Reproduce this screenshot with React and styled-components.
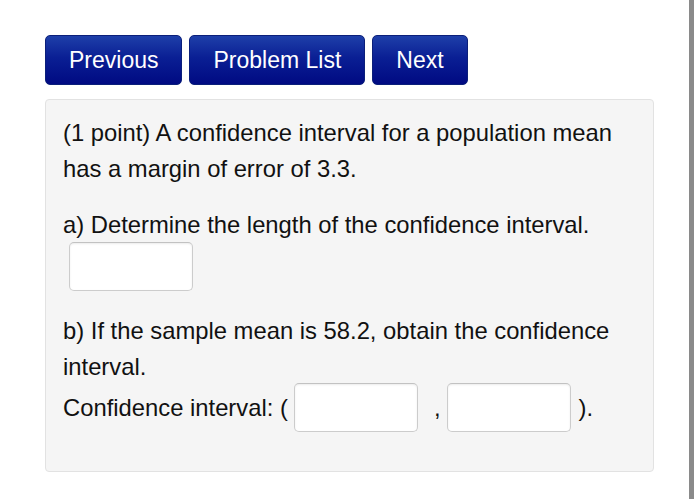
import React from 'react'
import styled, { createGlobalStyle } from 'styled-components'

const GlobalStyle = createGlobalStyle`
    html, body {
        margin: 0;
        padding: 0;
        background: #ffffff;
    }
    body {
        font-family: "Liberation Sans", Arial, Helvetica, sans-serif;
        color: #111;
    }
`

const Page = styled.div`
    position: relative;
    width: 700px;
    height: 501px;
    padding: 35px 0 0 45px;
    box-sizing: border-box;
    overflow: hidden;
`

const ScrollIndicator = styled.div`
    position: fixed;
    top: 0;
    right: 6px;
    width: 5px;
    height: 499px;
    background: #8a8a8a;
    z-index: 10;
`

const NavBar = styled.div`
    display: flex;
    gap: 7px;
`

const NavButton = styled.button`
    height: 50px;
    padding: 0 23px;
    box-sizing: border-box;
    border: 1px solid #0b1f7a;
    border-radius: 5px;
    background: linear-gradient(to bottom, #1e3fa9 0%, #0a1f94 45%, #000a82 100%);
    color: #ffffff;
    font-family: "Liberation Sans", Arial, sans-serif;
    font-size: 23px;
    line-height: 48px;
    cursor: pointer;
`

const Panel = styled.div`
    width: 609px;
    margin-top: 14px;
    padding: 15px 18px 39px 17px;
    box-sizing: border-box;
    background: #f5f5f5;
    border: 1px solid #e2e2e2;
    border-radius: 4px;
    font-size: 23.8px;
    line-height: 36px;
`

const Para = styled.p`
    margin: ${p => p.$top || 0}px 0 0 0;
`

const AnswerBox = styled.input`
    display: block;
    width: 124px;
    height: 49px;
    box-sizing: border-box;
    margin: ${p => p.$top || 0}px ${p => p.$right || 0}px 0 ${p => p.$left || 0}px;
    border: 1px solid #cccccc;
    border-top-color: #c2c2c2;
    border-radius: 5px;
    background: #ffffff;
    box-shadow: inset 0 1px 2px rgba(0, 0, 0, 0.08);
    font-size: 20px;
    outline: none;
`

const IntervalRow = styled.div`
    display: flex;
    align-items: center;
    margin-top: -2px;
    height: 49px;
`

const RowText = styled.span`
    white-space: pre;
`

export default function App() {
    return (
        <>
            <GlobalStyle />
            <Page>
                <NavBar>
                    <NavButton>Previous</NavButton>
                    <NavButton>Problem List</NavButton>
                    <NavButton>Next</NavButton>
                </NavBar>
                <Panel>
                    <Para>
                        (1 point) A confidence interval for a population mean
                        has a margin of error of 3.3.
                    </Para>
                    <Para $top={20}>a) Determine the length of the confidence interval.</Para>
                    <AnswerBox $left={6} $top={-1} />
                    <Para $top={22}>
                        b) If the sample mean is 58.2, obtain the confidence interval.
                    </Para>
                    <IntervalRow>
                        <RowText>Confidence interval: (</RowText>
                        <AnswerBox $left={6} $right={16} />
                        <RowText>,</RowText>
                        <AnswerBox $left={6} $right={8} />
                        <RowText>).</RowText>
                    </IntervalRow>
                </Panel>
                <ScrollIndicator />
            </Page>
        </>
    )
}
